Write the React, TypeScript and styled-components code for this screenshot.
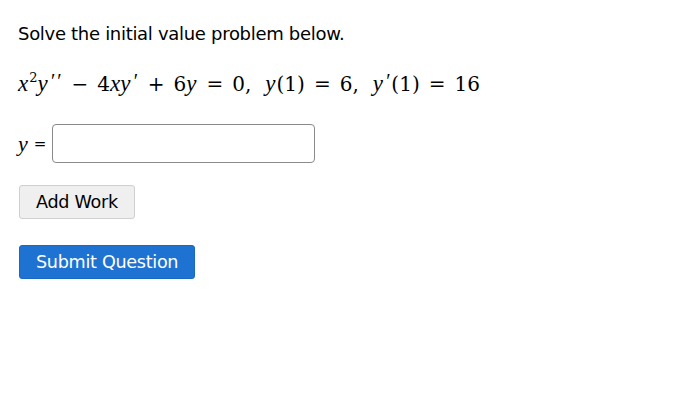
import React from "react";
import styled, { createGlobalStyle } from "styled-components";

const GlobalStyle = createGlobalStyle`
  *, *::before, *::after { box-sizing: border-box; }
  body {
    margin: 0;
    background: #fff;
    color: #000;
    font-family: "DejaVu Sans", Verdana, sans-serif;
  }
`;

const Page = styled.div`
  padding: 22px 18px;
  display: flex;
  flex-direction: column;
  align-items: flex-start;
`;

const Prompt = styled.p`
  margin: 0;
  font-size: 18px;
  letter-spacing: -0.3px;
  line-height: 24px;
`;

const MathLine = styled.div`
  margin-top: 24px;
  font-family: "DejaVu Serif", "Liberation Serif", serif;
  font-size: 20px;
  line-height: 28px;
  white-space: pre;
`;

const V = styled.i`
  font-family: "Liberation Serif", serif;
  font-style: italic;
  font-size: 23px;
  padding-right: 1px;
`;

const Sup = styled.sup`
  font-size: 13px;
  vertical-align: 9px;
  line-height: 0;
`;

const Prime = styled.span`
  font-family: "Liberation Serif", serif;
  font-style: italic;
  font-size: 20px;
  vertical-align: 3px;
  line-height: 0;
  letter-spacing: 2px;
  padding-left: 1px;
`;

const Op = styled.span`
  padding: 0 9px;
`;

const Gap = styled.span<{ w: number }>`
  display: inline-block;
  width: ${(p) => p.w}px;
`;

const AnswerRow = styled.label`
  margin-top: 26px;
  display: flex;
  align-items: center;
  gap: 6px;
  font-size: 15px;
`;

const AnswerVar = styled.i`
  font-family: "Liberation Serif", serif;
  font-size: 22px;
`;

const AnswerInput = styled.input`
  width: 263px;
  height: 39px;
  border: 1px solid #8a8a8a;
  border-radius: 4px;
  padding: 0 8px;
  font-size: 16px;
`;

const Button = styled.button<{ primary?: boolean }>`
  font-family: "DejaVu Sans", Verdana, sans-serif;
  font-size: 17.6px;
  letter-spacing: -0.3px;
  height: 34px;
  padding: 0 16px;
  border-radius: 3px;
  cursor: pointer;
  color: ${(p) => (p.primary ? "#fff" : "#000")};
  background: ${(p) => (p.primary ? "#1e73d2" : "#efefef")};
  border: 1px solid ${(p) => (p.primary ? "#1868c4" : "#cfcfcf")};
`;

const WorkButton = styled(Button)`
  margin-top: 22px;
  margin-left: 1px;
`;

const SubmitButton = styled(Button)`
  margin-top: 26px;
  margin-left: 1px;
`;

const App = () => {
  return (
    <>
      <GlobalStyle />
      <Page>
        <Prompt>Solve the initial value problem below.</Prompt>
        <MathLine>
          <V>x</V>
          <Sup>2</Sup>
          <V>y</V>
          <Prime>′′</Prime>
          <Op>−</Op>4<V>xy</V>
          <Prime>′</Prime>
          <Op>+</Op>6<V>y</V>
          <Op>=</Op>0,<Gap w={14} />
          <V>y</V>(1)<Op>=</Op>6,<Gap w={14} />
          <V>y</V>
          <Prime>′</Prime>(1)<Op>=</Op>16
        </MathLine>
        <AnswerRow>
          <AnswerVar>y</AnswerVar> =
          <AnswerInput type="text" />
        </AnswerRow>
        <WorkButton>Add Work</WorkButton>
        <SubmitButton primary>Submit Question</SubmitButton>
      </Page>
    </>
  );
};

export default App;
